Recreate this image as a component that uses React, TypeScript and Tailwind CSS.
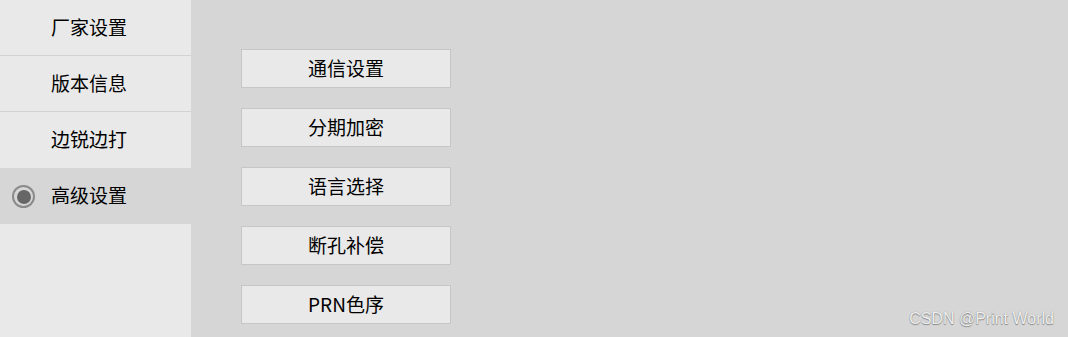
import React from 'react'

const menu = ['厂家设置', '版本信息', '边锐边打', '高级设置']
const buttons = ['通信设置', '分期加密', '语言选择', '断孔补偿', 'PRN色序']

export default function App() {
  const active = 3
  return (
    <div
      className="flex w-[1068px] h-[337px] bg-[#d6d6d6] text-black overflow-hidden relative"
      style={{ fontFamily: '"Noto Sans CJK SC", "Microsoft YaHei", sans-serif' }}
    >
      <div className="w-[191px] shrink-0 bg-[#e9e9e9] flex flex-col">
        {menu.map((m, i) => (
          <div
            key={m}
            className={`h-[56px] flex items-center relative ${
              i === active ? 'bg-[#d6d6d6]' : i < 2 ? 'border-b border-[#d2d2d2]' : ''
            }`}
          >
            {i === active && (
              <span className="absolute left-[12px] top-[17px] w-[23px] h-[23px] rounded-full border-[2px] border-[#8a8a8a] flex items-center justify-center">
                <span className="w-[14px] h-[14px] rounded-full bg-[#666666]" />
              </span>
            )}
            <span className="pl-[51px] pb-[3px] text-[19px] leading-none">{m}</span>
          </div>
        ))}
      </div>
      <div className="flex flex-col pl-[50px] pt-[49px] gap-[20px]">
        {buttons.map(b => (
          <div
            key={b}
            className="w-[210px] h-[39px] pb-[3px] bg-[#e9e9e9] border border-[#c6c6c6] flex items-center justify-center text-[19px] leading-none"
          >
            {b}
          </div>
        ))}
      </div>
      <div
        className="absolute right-[14px] bottom-[6px] text-[16px] text-[#eeeeee]"
        style={{ fontFamily: '"Liberation Sans", Arial, sans-serif', textShadow: '0 0 1px #8a8a8a, 0 1px 1px #8a8a8a' }}
      >
        CSDN @Print World
      </div>
    </div>
  )
}
